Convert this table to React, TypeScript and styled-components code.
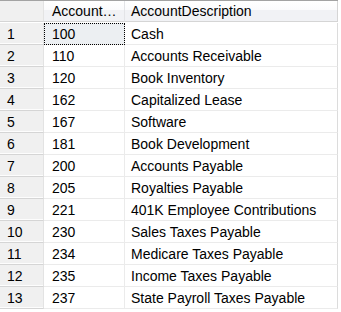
import styled, { createGlobalStyle } from 'styled-components';

const GlobalStyle = createGlobalStyle`
   html, body {
      margin: 0;
      padding: 0;
      background: #ffffff;
   }
`;

const accounts = [
   { no: 100, description: 'Cash' },
   { no: 110, description: 'Accounts Receivable' },
   { no: 120, description: 'Book Inventory' },
   { no: 162, description: 'Capitalized Lease' },
   { no: 167, description: 'Software' },
   { no: 181, description: 'Book Development' },
   { no: 200, description: 'Accounts Payable' },
   { no: 205, description: 'Royalties Payable' },
   { no: 221, description: '401K Employee Contributions' },
   { no: 230, description: 'Sales Taxes Payable' },
   { no: 234, description: 'Medicare Taxes Payable' },
   { no: 235, description: 'Income Taxes Payable' },
   { no: 237, description: 'State Payroll Taxes Payable' },
];

const App = () => (
   <>
      <GlobalStyle />
      <Grid>
         <HeaderCell />
         <HeaderCell>AccountNo</HeaderCell>
         <HeaderCell>AccountDescription</HeaderCell>
         {accounts.map((account, index) => (
            <Row key={account.no}>
               <RowNumber>{index + 1}</RowNumber>
               <Cell $selected={index === 0} $inset={8}>
                  {account.no}
               </Cell>
               <Cell $inset={6}>{account.description}</Cell>
            </Row>
         ))}
      </Grid>
   </>
);

const Grid = styled.div`
   display: grid;
   grid-template-columns: 44px 81px 213px;
   grid-auto-rows: 22px;
   width: 338px;
   border-top: 1px solid #a3a3a3;
   font-family: 'Liberation Sans', Arial, sans-serif;
   font-size: 14px;
   color: #000000;
`;

const Row = styled.div`
   display: contents;
`;

const HeaderCell = styled.div`
   box-sizing: border-box;
   height: 21px;
   padding: 0 6px 0 8px;
   line-height: 20px;
   white-space: nowrap;
   overflow: hidden;
   text-overflow: ellipsis;
   background: linear-gradient(#ffffff 0, #fbfbfc 45%, #f1f2f5 46%, #f1f2f5 100%);
   border-right: 1px solid #e3e4e7;
   border-bottom: 1px solid #d5d5d5;

   &:first-child {
      background: #f0f0f0;
      border-right-color: #e3e3e3;
   }

   &:nth-child(3) {
      padding-left: 6px;
      border-right-color: #d5d5d5;
   }
`;

const RowNumber = styled.div`
   box-sizing: border-box;
   padding: 1px 0 0 7px;
   line-height: 20px;
   background: #f0f0f0;
   border-right: 1px solid #e3e3e3;
   border-bottom: 1px solid #d5d5d5;
   box-shadow: inset 0 -1px 0 #fdfdfd;
`;

const Cell = styled.div<{ $selected?: boolean; $inset: number }>`
   box-sizing: border-box;
   padding: 1px 0 0 ${({ $inset }) => $inset}px;
   line-height: 20px;
   white-space: nowrap;
   overflow: hidden;
   border-right: 1px solid #ebebeb;
   border-bottom: 1px solid #ebebeb;
   background: ${({ $selected }) => ($selected ? '#eceff2' : '#ffffff')};
   outline: ${({ $selected }) => ($selected ? '1px dotted #000000' : 'none')};
   outline-offset: -1px;

   &:last-child {
      border-right-color: #dcdcdc;
   }
`;

export default App;
